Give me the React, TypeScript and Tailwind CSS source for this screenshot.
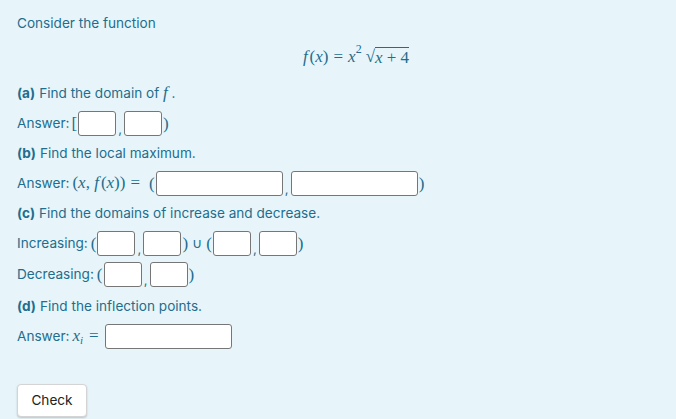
import React from "react";

const serif = "font-['Liberation_Serif',serif]";

function Box({ wide = false }: { wide?: boolean }) {
  return (
    <input
      type="text"
      className={`${wide ? "w-[127px]" : "w-[38px]"} h-[25px] bg-white border border-[#767676] rounded-[3px] outline-none`}
    />
  );
}

function Comma() {
  return <span className="w-[8px] text-center self-end pb-[2px] leading-none text-[13px]">,</span>;
}

function Open({ ch = "(" }: { ch?: string }) {
  return <span className={`${serif} text-[17px] leading-none mr-[1px]`}>{ch}</span>;
}

function Close() {
  return <span className={`${serif} text-[17px] leading-none ml-[1px]`}>)</span>;
}

function Row({ children, h = "h-[30px]" }: { children: React.ReactNode; h?: string }) {
  return <div className={`flex items-center ${h}`}>{children}</div>;
}

function F() {
  return <i className="mr-[2px]">f</i>;
}

export default function App() {
  return (
    <div className="min-h-screen bg-[#e7f5fa] text-[#226d8d] font-['Inter',sans-serif] text-[13.6px] px-[17px] pt-[9px]">
      <Row h="h-[28px]">Consider the function</Row>

      <div className="flex justify-center pl-[36px] h-[30px] mt-[5px] items-center">
        <span className={`${serif} text-[17px] flex items-center`}>
          <F />(<i>x</i>)<span className="mx-[5px]">=</span><i>x</i>
          <sup className="text-[12px] -mt-[4px]">2</sup>
          <span className="ml-[4px]">√</span>
          <span className="border-t border-[#226d8d] leading-[17px] pt-[1px] -mt-[1px]">
            <i>x</i> + 4
          </span>
        </span>
      </div>

      <div className="mt-[6px]">
        <Row>
          <b className="font-bold mr-[4px]">(a)</b> Find the domain of&nbsp;
          <i className={`${serif} text-[17px]`}>f</i>&nbsp;.
        </Row>
        <Row>
          <span className="mr-[2px]">Answer:</span>
          <Open ch="[" />
          <Box />
          <Comma />
          <Box />
          <Close />
        </Row>
        <Row>
          <b className="font-bold mr-[4px]">(b)</b> Find the local maximum.
        </Row>
        <Row>
          <span className="mr-[3px]">Answer:</span>
          <span className={`${serif} text-[17px] mr-[4px]`}>
            (<i>x</i>, <F />(<i>x</i>))<span className="mx-[5px]">=</span>
          </span>
          <Open />
          <Box wide />
          <Comma />
          <Box wide />
          <Close />
        </Row>
        <Row>
          <b className="font-bold mr-[4px]">(c)</b> Find the domains of increase and decrease.
        </Row>
        <Row>
          <span className="mr-[3px]">Increasing:</span>
          <Open />
          <Box />
          <Comma />
          <Box />
          <Close />
          <span className="mx-[4px]">∪</span>
          <Open />
          <Box />
          <Comma />
          <Box />
          <Close />
        </Row>
        <Row h="h-[30px] mt-[1px]">
          <span className="mr-[3px]">Decreasing:</span>
          <Open />
          <Box />
          <Comma />
          <Box />
          <Close />
        </Row>
        <Row h="h-[30px] mt-[2px]">
          <b className="font-bold mr-[4px]">(d)</b> Find the inflection points.
        </Row>
        <Row>
          <span className="mr-[3px]">Answer:</span>
          <span className={`${serif} text-[17px] mr-[6px]`}>
            <i>x</i>
            <sub className="text-[11px]">
              <i>i</i>
            </sub>
            <span className="ml-[6px]">=</span>
          </span>
          <Box wide />
        </Row>
      </div>

      <button className="mt-[33px] w-[70px] h-[33px] bg-white text-[#222] text-[13.6px] border border-[#d4d4d4] rounded-[4px] shadow-[0_1px_2px_rgba(0,0,0,0.2)]">
        Check
      </button>
    </div>
  );
}
